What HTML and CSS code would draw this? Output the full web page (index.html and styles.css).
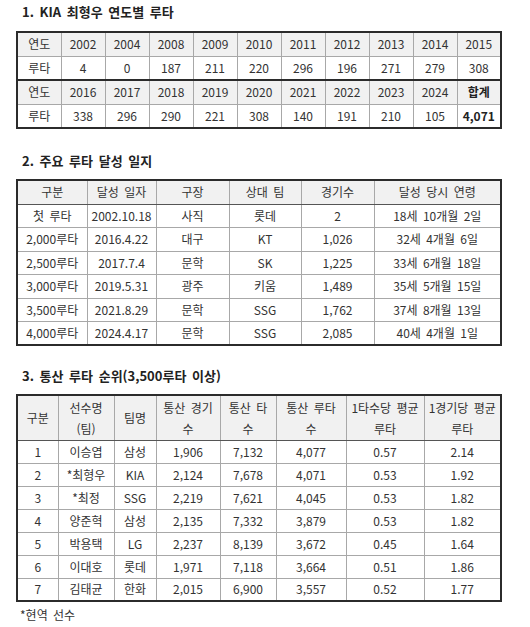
FILE: index.html
```html
<!DOCTYPE html>
<html lang="ko">
<head>
<meta charset="utf-8">
<link rel="stylesheet" href="styles.css">
</head>
<body>
<div class="page">
  <div class="title t1">1. KIA 최형우 연도별 루타</div>
  <table class="grid yearly">
    <tr class="head"><td>연도</td><td>2002</td><td>2004</td><td>2008</td><td>2009</td><td>2010</td><td>2011</td><td>2012</td><td>2013</td><td>2014</td><td>2015</td></tr>
    <tr class="split"><td>루타</td><td>4</td><td>0</td><td>187</td><td>211</td><td>220</td><td>296</td><td>196</td><td>271</td><td>279</td><td>308</td></tr>
    <tr class="head"><td>연도</td><td>2016</td><td>2017</td><td>2018</td><td>2019</td><td>2020</td><td>2021</td><td>2022</td><td>2023</td><td>2024</td><td class="b">합계</td></tr>
    <tr><td>루타</td><td>338</td><td>296</td><td>290</td><td>221</td><td>308</td><td>140</td><td>191</td><td>210</td><td>105</td><td class="b">4,071</td></tr>
  </table>

  <div class="title t2">2. 주요 루타 달성 일지</div>
  <table class="grid log">
    <colgroup><col class="c70"><col class="c69"><col class="c73"><col class="c72"><col class="c73"><col></colgroup>
    <tr class="head hb"><td>구분</td><td>달성 일자</td><td>구장</td><td>상대 팀</td><td>경기수</td><td>달성 당시 연령</td></tr>
    <tr><td>첫 루타</td><td>2002.10.18</td><td>사직</td><td>롯데</td><td>2</td><td>18세 10개월 2일</td></tr>
    <tr><td>2,000루타</td><td>2016.4.22</td><td>대구</td><td>KT</td><td>1,026</td><td>32세 4개월 6일</td></tr>
    <tr><td>2,500루타</td><td>2017.7.4</td><td>문학</td><td>SK</td><td>1,225</td><td>33세 6개월 18일</td></tr>
    <tr><td>3,000루타</td><td>2019.5.31</td><td>광주</td><td>키움</td><td>1,489</td><td>35세 5개월 15일</td></tr>
    <tr><td>3,500루타</td><td>2021.8.29</td><td>문학</td><td>SSG</td><td>1,762</td><td>37세 8개월 13일</td></tr>
    <tr><td>4,000루타</td><td>2024.4.17</td><td>문학</td><td>SSG</td><td>2,085</td><td>40세 4개월 1일</td></tr>
  </table>

  <div class="title t3">3. 통산 루타 순위(3,500루타 이상)</div>
  <table class="grid rank">
    <colgroup><col class="d41"><col class="d56"><col class="d42"><col class="d64"><col class="d56"><col class="d70"><col class="d78"><col></colgroup>
    <tr class="head hb tall"><td>구분</td><td>선수명<br>(팀)</td><td>팀명</td><td>통산 경기<br>수</td><td>통산 타<br>수</td><td>통산 루타<br>수</td><td>1타수당 평균<br>루타</td><td>1경기당 평균<br>루타</td></tr>
    <tr><td>1</td><td>이승엽</td><td>삼성</td><td>1,906</td><td>7,132</td><td>4,077</td><td>0.57</td><td>2.14</td></tr>
    <tr><td>2</td><td>*최형우</td><td>KIA</td><td>2,124</td><td>7,678</td><td>4,071</td><td>0.53</td><td>1.92</td></tr>
    <tr><td>3</td><td>*최정</td><td>SSG</td><td>2,219</td><td>7,621</td><td>4,045</td><td>0.53</td><td>1.82</td></tr>
    <tr><td>4</td><td>양준혁</td><td>삼성</td><td>2,135</td><td>7,332</td><td>3,879</td><td>0.53</td><td>1.82</td></tr>
    <tr><td>5</td><td>박용택</td><td>LG</td><td>2,237</td><td>8,139</td><td>3,672</td><td>0.45</td><td>1.64</td></tr>
    <tr><td>6</td><td>이대호</td><td>롯데</td><td>1,971</td><td>7,118</td><td>3,664</td><td>0.51</td><td>1.86</td></tr>
    <tr><td>7</td><td>김태균</td><td>한화</td><td>2,015</td><td>6,900</td><td>3,557</td><td>0.52</td><td>1.77</td></tr>
  </table>
  <div class="note">*현역 선수</div>
</div>
</body>
</html>
```

FILE: styles.css
```css
* { box-sizing: border-box; }
body {
  margin: 0;
  background: #fff;
  color: #333;
  font-family: "Noto Sans CJK KR", "Noto Sans", sans-serif;
}
.page {
  padding: 0 28px 0 16px;
}
.title {
  font-size: 13px;
  font-weight: bold;
  color: #222;
  height: 16px;
  line-height: 16px;
  margin-left: 6px;
  word-spacing: 2px;
}
.t1 { margin-top: 4px; margin-bottom: 11px; }
.t2 { margin-top: 24px; margin-bottom: 10px; }
.t3 { margin-top: 22px; margin-bottom: 10px; }
.grid {
  width: 486px;
  border-collapse: collapse;
  border: 2px solid #2b2b2b;
  table-layout: fixed;
  font-size: 12px;
  line-height: 16px;
}
.grid td {
  border: 1px solid #a8a8a8;
  text-align: center;
  padding: 0;
  white-space: nowrap;
  word-spacing: 2px;
}
.grid tr.head td { background: #f1f1f1; }
.yearly tr { height: 24px; }
.yearly tr.split td { border-bottom: 2px solid #2b2b2b; }
.b { font-weight: bold; color: #222; }
.grid tr.hb td { border-bottom: 1px solid #555; }
.log tr { height: 23.5px; }
.log tr.head { height: 24px; }
.c70 { width: 70px; }
.c69 { width: 69px; }
.c73 { width: 73px; }
.c72 { width: 72px; }
.rank tr { height: 23px; }
.rank tr.tall { height: 45px; }
.rank tr.tall td { line-height: 21px; }
.d41 { width: 41px; }
.d56 { width: 56px; }
.d42 { width: 42px; }
.d64 { width: 64px; }
.d70 { width: 70px; }
.d78 { width: 78px; }
.note {
  font-size: 12px;
  margin-top: 5px;
  margin-left: 4px;
  height: 16px;
  line-height: 16px;
  word-spacing: 2px;
}
```
